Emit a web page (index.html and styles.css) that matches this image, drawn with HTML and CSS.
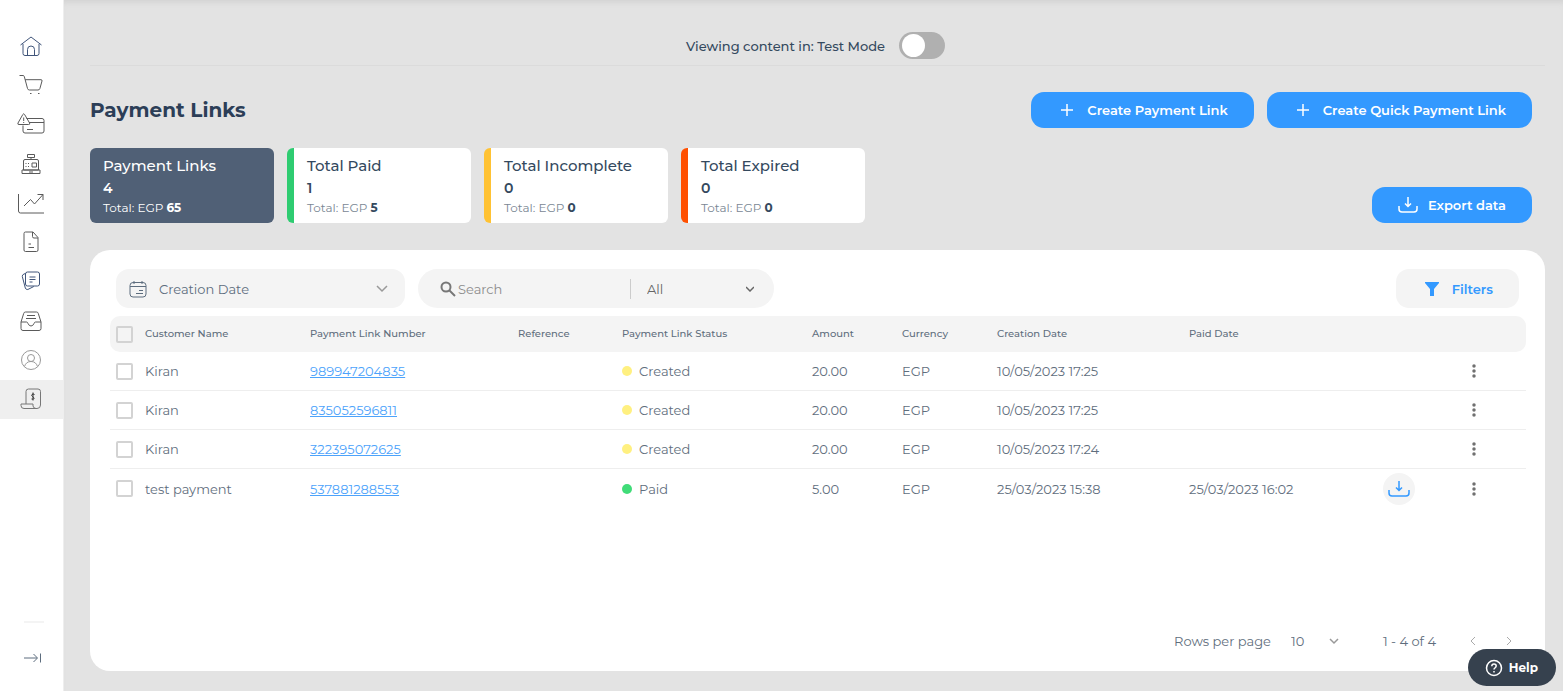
FILE: index.html
```html
<!doctype html>
<html lang="en">

<head>
  <meta charset="UTF-8" />
  <meta name="viewport" content="width=device-width, initial-scale=1" />
  <title>Payment Links</title>
  <link rel="stylesheet" href="styles.css">
</head>

<body>
  <aside class="sidebar">
    <nav class="side-nav" aria-label="Main">
      <a href="#" class="side-link navy" aria-label="Home">
        <svg width="24" height="24" viewBox="0 0 24 24"><path d="M1.500 11 12 3l10.500 8M4 10v9.500q0 2 2 2h12q2 0 2-2V10M8.500 21v-5.500a3.500 3.500 0 0 1 7 0V21" /></svg>
      </a>
      <a href="#" class="side-link" aria-label="Orders">
        <svg width="24" height="24" viewBox="0 0 24 24"><path d="M.5 2.500h3.500q1 0 1.300 1l3.200 12q.4 1.500 2 1.500h8.500q1.500 0 1.900-1.500L23 8q.3-1.300-1-1.300H6.200" /><path d="M11 20.500h1.500M19 20.500h1.500" /></svg>
      </a>
      <a href="#" class="side-link" aria-label="Risk">
        <svg width="28" height="24" viewBox="0 0 28 24"><path d="M9.500 6.500H25q2 0 2 2V19q0 2-2 2H8q-2 0-2-2v-5.500M12 10.500h15M10 17.500h6" /><path d="M5.800 2.500q.9-1.500 1.800 0l5 8.500q.7 1.500-1 1.500H2q-1.700 0-1-1.500zM6.700 5.500v3.500M6.700 10v1" /></svg>
      </a>
      <a href="#" class="side-link" aria-label="Point of sale">
        <svg width="22" height="24" viewBox="0 0 22 24"><path d="M7.500 2.500h7v3h-7zM11 5.500v2M5 7.500h12q1.500 0 1.500 1.500v9h-15V9q0-1.500 1.500-1.500zM2 18h18v3.500H2zM12 11h4.500v4H12zM6 11v1M6 14v1M8.500 11v1M8.500 14v1M9 20h4" /></svg>
      </a>
      <a href="#" class="side-link" aria-label="Analytics">
        <svg width="28" height="24" viewBox="0 0 28 24"><path d="M1.500 3v17q0 2 2 2H27M7 15l6.500-6.500 4 4.500L26 3.500M20.500 3.500H26V9" /></svg>
      </a>
      <a href="#" class="side-link" aria-label="Invoices">
        <svg width="22" height="24" viewBox="0 0 22 24"><path d="M5.500 2H13l5 5.500V20q0 1.500-1.500 1.500h-11Q4 21.500 4 20V3.500Q4 2 5.500 2zM12.500 2v4.500q0 1.500 1.500 1.500h4" /><path d="M8.500 14h2.500M8.500 17.500h5.500" /></svg>
      </a>
      <a href="#" class="side-link navy" aria-label="Catalog">
        <svg width="24" height="24" viewBox="0 0 24 24"><path d="M8.500 3h10Q20.500 3 20.500 5v10q0 2-2 2h-10q-2 0-2-2V5q0-2 2-2z" /><path d="M6.500 4.500 5 5Q3 5.800 3.300 7.500l3 11.500q.6 1.800 2.500 1.500l6-3M10.500 8h6M10.500 10.500h6M10.500 13h3" /></svg>
      </a>
      <a href="#" class="side-link" aria-label="Inbox">
        <svg width="24" height="24" viewBox="0 0 24 24"><path d="M6.500 3h11q1.500 0 1.800 1.500L22 13v6.500q0 2-2 2H4q-2 0-2-2V13l2.700-8.500Q5 3 6.500 3zM2 13h5.500q1 0 1.500 1.500Q10 17 12 17t3-2.500q.5-1.500 1.500-1.500H22M8 6.500h8M7 9.500h10" /></svg>
      </a>
      <a href="#" class="side-link light" aria-label="Customers">
        <svg width="22" height="24" viewBox="0 0 22 24"><circle cx="11" cy="12" r="9.500" /><circle cx="11" cy="10" r="3.500" /><path d="M4.500 18.500q1.500-5 6.500-5t6.500 5" /></svg>
      </a>
      <a href="#" class="side-link active" aria-label="Payment Links">
        <svg width="24" height="24" viewBox="0 0 24 24"><path d="M7 17V4.500Q7 2 9.500 2H19q2.500 0 2.500 2.500V18q0 3.500-3.500 3.500H5q-3 0-3-3V17h12v2q.5 2.500 3 2.500" /><path class="bold" d="M15.500 7.500q-1.500-1-2.500 0t.5 2 1.500 2-2.500.5M14 5.500v8" /></svg>
      </a>
    </nav>
    <div class="side-bottom">
      <button type="button" class="expand-button" aria-label="Expand menu">
        <svg width="18" height="12" viewBox="0 0 18 12"><path d="M0 6h13M9.500 2l4 4-4 4M16.500 1.500v9" /></svg>
      </button>
    </div>
  </aside>

  <main class="main">
    <div class="mode-bar">
      <label for="testMode">Viewing content in: Test Mode</label>
      <input type="checkbox" id="testMode" class="switch" role="switch" />
    </div>

    <div class="row">
      <h1>Payment Links</h1>
      <div class="actions">
        <button type="button" class="primary-button">
          <svg width="12" height="12" viewBox="0 0 12 12"><path d="M6 0v12M0 6h12" /></svg>
          Create Payment Link
        </button>
        <button type="button" class="primary-button">
          <svg width="12" height="12" viewBox="0 0 12 12"><path d="M6 0v12M0 6h12" /></svg>
          Create Quick Payment Link
        </button>
      </div>
    </div>

    <div class="row summary">
      <div class="cards">
        <div class="card selected">
          <div class="card-title">Payment Links</div>
          <div class="card-count">4</div>
          <div class="card-total">Total: EGP <b>65</b></div>
        </div>
        <div class="card paid">
          <div class="card-title">Total Paid</div>
          <div class="card-count">1</div>
          <div class="card-total">Total: EGP <b>5</b></div>
        </div>
        <div class="card incomplete">
          <div class="card-title">Total Incomplete</div>
          <div class="card-count">0</div>
          <div class="card-total">Total: EGP <b>0</b></div>
        </div>
        <div class="card expired">
          <div class="card-title">Total Expired</div>
          <div class="card-count">0</div>
          <div class="card-total">Total: EGP <b>0</b></div>
        </div>
      </div>
      <button type="button" class="primary-button export">
        <svg width="20" height="16" viewBox="0 0 20 16"><path d="M1 9v3q0 3 3 3h12q3 0 3-3V9M10 0v9M7 6.500l3 3 3-3" /></svg>
        Export data
      </button>
    </div>

    <section class="panel">
      <div class="toolbar">
        <div class="date-box">
          <svg width="18" height="18" viewBox="0 0 18 18"><path d="M4 2.500h10q3 0 3 3V14q0 3-3 3H4q-3 0-3-3V5.500q0-3 3-3zM1 6.500h16M5 1v3M13 1v3M10 10.500h4M7 13.500h7" /></svg>
          <select class="date-select" aria-label="Date type">
            <option>Creation Date</option>
          </select>
          <svg class="chevron" width="12" height="8" viewBox="0 0 12 8"><path d="M1 1l5 5 5-5" /></svg>
        </div>
        <div class="search-box">
          <svg class="search-icon" width="16" height="16" viewBox="0 0 16 16"><circle cx="6" cy="6" r="4.500" /><path d="M9.500 9.500 15 15" /></svg>
          <input type="search" class="search-input" placeholder="Search" aria-label="Search" />
          <select class="search-select" aria-label="Search in">
            <option>All</option>
          </select>
          <svg class="chevron dark" width="8" height="6" viewBox="0 0 8 6"><path d="M0 1l4 4 4-4" /></svg>
        </div>
        <button type="button" class="filter-button">
          <svg width="14" height="14" viewBox="0 0 14 14"><path d="M0 0h14v1L9 7v7H5V7L0 1z" /></svg>
          Filters
        </button>
      </div>

      <table class="links-table">
        <colgroup>
          <col class="col-check"><col class="col-name"><col class="col-number"><col class="col-ref"><col class="col-status">
          <col class="col-amount"><col class="col-currency"><col class="col-created"><col class="col-paid"><col class="col-download"><col class="col-menu">
        </colgroup>
        <thead>
          <tr>
            <th><input type="checkbox" class="check" aria-label="Select all" /></th>
            <th>Customer Name</th>
            <th>Payment Link Number</th>
            <th>Reference</th>
            <th>Payment Link Status</th>
            <th>Amount</th>
            <th>Currency</th>
            <th>Creation Date</th>
            <th>Paid Date</th>
            <th></th>
            <th></th>
          </tr>
        </thead>
        <tbody id="linkRows"></tbody>
      </table>

      <div class="pagination">
        <label for="pageSize">Rows per page</label>
        <select id="pageSize" class="page-size">
          <option>10</option>
        </select>
        <svg class="chevron" width="10" height="7" viewBox="0 0 10 7"><path d="M1 1l4 4 4-4" /></svg>
        <span class="page-range">1 - 4 of 4</span>
        <button type="button" class="page-button" aria-label="Previous page">
          <svg width="7" height="10" viewBox="0 0 7 10"><path d="M6 1L2 5l4 4" /></svg>
        </button>
        <button type="button" class="page-button" aria-label="Next page">
          <svg width="7" height="10" viewBox="0 0 7 10"><path d="M1 1l4 4-4 4" /></svg>
        </button>
      </div>
    </section>
  </main>

  <button type="button" class="help-button">
    <svg width="18" height="18" viewBox="0 0 18 18"><circle cx="9" cy="9" r="7.500" /><path d="M6.800 7.300q0-2.200 2.200-2.200t2.200 2q0 1-1.200 1.700Q9 9.300 9 10.500M9 12v1.500" /></svg>
    Help
  </button>

  <script src="script.js"></script>
</body>

</html>
```
FILE: styles.css
```css
* {
  box-sizing: border-box;
}

body {
  display: flex;
  min-height: 100vh;
  margin: 0;
  font-family: Montserrat, Inter, "Open Sans", sans-serif;
  font-size: 13px;
  line-height: 20px;
  background-color: #e3e3e3;
  color: #34495e;
}

button,
input,
select {
  font: inherit;
  color: inherit;
  margin: 0;
}

button {
  cursor: pointer;
  border: none;
  padding: 0;
  background: none;
}

select {
  appearance: none;
  border: none;
  padding: 0;
  background: none;
}

svg {
  display: block;
  flex: none;
  fill: none;
  stroke: currentColor;
}

/* Sidebar */
.sidebar {
  display: flex;
  flex-direction: column;
  justify-content: space-between;
  flex: none;
  width: 64px;
  padding: 26px 0 22px;
  background-color: white;
  border-right: 1px solid #eee;
}

.side-nav {
  display: flex;
  flex-direction: column;
  height: 393px;
}

.side-link {
  display: flex;
  flex: 1;
  align-items: center;
  justify-content: center;
  padding-right: 2px;
  color: #5a5a5a;
}

.side-link.navy {
  color: #40557a;
}

.side-link.light {
  color: #999;
}

.side-link.active {
  background-color: #efefef;
  color: #777;
}

.bold {
  stroke: #333;
}

.side-bottom {
  width: 20px;
  margin-left: 24px;
  padding-top: 26px;
  border-top: 2px solid #f4f4f4;
}

.expand-button {
  color: #5d6d7e;
}

/* Page */
.main {
  display: flex;
  flex: 1;
  flex-direction: column;
  min-width: 0;
  padding: 0 18px 20px 26px;
  box-shadow: inset 0 6px 6px -4px #d0d0d0;
}

.mode-bar {
  display: flex;
  align-items: center;
  justify-content: center;
  gap: 14px;
  padding: 32px 4px 6px 0;
  border-bottom: 1px solid #dbdbdb;
}

.switch {
  appearance: none;
  width: 46px;
  height: 27px;
  padding: 2px 3px;
  border-radius: 14px;
  background-color: #b0b0b0;
  cursor: pointer;
}

.switch::before {
  content: "";
  display: block;
  width: 23px;
  height: 23px;
  border-radius: 50%;
  background-color: white;
}

.switch:checked {
  background-color: #3399ff;
}

.switch:checked::before {
  margin-left: auto;
}

label {
  font-weight: 500;
}

.row {
  display: flex;
  align-items: center;
  justify-content: space-between;
  padding: 26px 13px 0 0;
}

.row.summary {
  align-items: flex-end;
  padding-top: 20px;
}

h1 {
  margin: 0;
  font-size: 20px;
  line-height: 28px;
  font-weight: 700;
  color: #2c3e57;
}

.actions,
.cards {
  display: flex;
  gap: 13px;
}

.primary-button {
  display: flex;
  align-items: center;
  gap: 14px;
  height: 36px;
  padding: 0 26px 0 30px;
  border-radius: 13px;
  background-color: #3399ff;
  color: white;
  font-weight: 600;
}

.primary-button.export {
  gap: 10px;
  padding-left: 26px;
}

.primary-button svg {
  stroke-width: 1.5;
}

.card {
  width: 184px;
  height: 75px;
  padding: 8px 13px;
  border-radius: 6px;
  background-color: white;
}

.card.selected {
  background-color: #506076;
  color: white;
}

.card.paid {
  border-left: 7px solid #2ecc71;
}

.card.incomplete {
  border-left: 7px solid #ffc233;
}

.card.expired {
  border-left: 7px solid #ff5000;
}

.card-title {
  font-size: 15px;
  font-weight: 500;
}

.card-count {
  font-size: 14px;
  line-height: 24px;
  font-weight: 600;
}

.card-total {
  font-size: 12px;
  line-height: 16px;
  color: #7b8794;
}

.card-total b {
  color: #34495e;
}

.selected .card-total,
.selected b {
  color: white;
}

/* Links panel */
.panel {
  display: flex;
  flex: 1;
  flex-direction: column;
  margin-top: 27px;
  padding: 19px 20px 20px;
  border-radius: 20px;
  background-color: white;
}

.toolbar {
  display: flex;
  gap: 13px;
  padding: 0 6px 8px;
}

.date-box,
.search-box,
.filter-button {
  display: flex;
  align-items: center;
  height: 39px;
  border-radius: 13px;
  background-color: #f4f4f4;
}

.date-box {
  gap: 12px;
  width: 289px;
  padding: 0 17px 0 13px;
  color: #5d6d7e;
}

.date-select {
  flex: 1;
}

.chevron {
  stroke: #999;
  stroke-width: 1.5;
}

.chevron.dark {
  stroke: #666;
}

.search-box {
  width: 356px;
  padding: 0 20px 0 22px;
  border-radius: 20px;
  color: #666;
}

.search-icon {
  stroke: #777;
  stroke-width: 2;
}

.search-input {
  flex: 1;
  min-width: 0;
  padding: 0 0 0 2px;
  border: none;
  outline: none;
  background: none;
}

.search-input::placeholder {
  color: #8c8c8c;
}

.search-select {
  width: 116px;
  padding-left: 16px;
  border-left: 1px solid #ccc;
}

.filter-button {
  gap: 13px;
  margin-left: auto;
  padding: 0 26px 0 29px;
  color: #3399ff;
  font-weight: 600;
}

.filter-button svg {
  fill: currentColor;
  stroke: none;
}

.links-table {
  width: 100%;
  table-layout: fixed;
  border-collapse: separate;
  border-spacing: 0;
  color: #5f6e7d;
}

.col-check { width: 35px; }
.col-name { width: 165px; }
.col-number { width: 208px; }
.col-ref { width: 104px; }
.col-status { width: 190px; }
.col-amount { width: 90px; }
.col-currency { width: 95px; }
.col-created { width: 192px; }
.col-paid { width: 194px; }
.col-download { width: 75px; }
.col-menu { width: 68px; }

th,
td {
  padding: 0;
  text-align: left;
  white-space: nowrap;
}

th {
  height: 36px;
  background-color: #f4f4f4;
  font-size: 10px;
  font-weight: 500;
}

th:first-child {
  border-radius: 10px 0 0 10px;
}

th:last-child {
  border-radius: 0 10px 10px 0;
}

td {
  height: 39px;
  border-bottom: 1px solid #eee;
}

tr:last-child td {
  border-bottom: none;
}

td a {
  color: #4da3fb;
}

.check {
  display: block;
  appearance: none;
  width: 17px;
  height: 17px;
  margin-left: 6px;
  border: 2px solid #d3d3d3;
  border-radius: 2px;
}

.check:checked {
  background-color: #3399ff;
}

.status {
  display: flex;
  align-items: center;
  gap: 7px;
}

.dot {
  width: 10px;
  height: 10px;
  border-radius: 50%;
  background-color: #fff080;
}

.dot.paid {
  background-color: #40dc78;
}

.download-button {
  display: grid;
  place-items: center;
  width: 32px;
  height: 32px;
  border-radius: 50%;
  background-color: #f4f4f4;
  color: #3399ff;
}

.download-button svg {
  stroke-width: 1.5;
}

.menu-button {
  display: block;
  width: 32px;
  height: 24px;
  color: #707070;
}

.menu-button svg {
  margin: 0 auto;
  fill: currentColor;
  stroke: none;
}

.pagination {
  display: flex;
  align-items: center;
  justify-content: flex-end;
  margin-top: auto;
  padding-right: 4px;
  color: #5f6e7d;
}

.pagination label {
  font-weight: 400;
}

.page-size {
  width: 38px;
  margin-left: 20px;
}

.page-range {
  margin: 0 24px 0 44px;
}

.page-button {
  display: grid;
  place-items: center;
  width: 24px;
  height: 20px;
  color: #aaa;
}

.page-button + .page-button {
  margin-left: 13px;
}

/* Floating help */
.help-button {
  position: fixed;
  right: 7px;
  bottom: 5px;
  display: flex;
  align-items: center;
  gap: 6px;
  height: 37px;
  padding: 0 18px 0 17px;
  border-radius: 19px;
  background-color: #36414e;
  color: white;
  font-size: 12px;
  font-weight: 700;
}

.help-button svg {
  stroke-width: 1.5;
}
```
FILE: script.js
```js
const links = [
  { name: "Kiran", number: "989947204835", status: "Created", amount: "20.00", created: "10/05/2023 17:25", paid: "" },
  { name: "Kiran", number: "835052596811", status: "Created", amount: "20.00", created: "10/05/2023 17:25", paid: "" },
  { name: "Kiran", number: "322395072625", status: "Created", amount: "20.00", created: "10/05/2023 17:24", paid: "" },
  { name: "test payment", number: "537881288553", status: "Paid", amount: "5.00", created: "25/03/2023 15:38", paid: "25/03/2023 16:02" },
];

const downloadButton = `
  <button type="button" class="download-button" aria-label="Download receipt">
    <svg width="22" height="16" viewBox="0 0 22 16"><path d="M1 9v3q0 3 3 3h14q3 0 3-3V9M11 0v9M8 6.500l3 3 3-3" /></svg>
  </button>`;

// Fill the table
document.getElementById("linkRows").innerHTML = links
  .map((link) => `
    <tr>
      <td><input type="checkbox" class="check" aria-label="Select ${link.number}" /></td>
      <td>${link.name}</td>
      <td><a href="#">${link.number}</a></td>
      <td></td>
      <td><div class="status"><span class="dot ${link.status.toLowerCase()}"></span>${link.status}</div></td>
      <td>${link.amount}</td>
      <td>EGP</td>
      <td>${link.created}</td>
      <td>${link.paid}</td>
      <td>${link.paid ? downloadButton : ""}</td>
      <td>
        <button type="button" class="menu-button" aria-label="More actions">
          <svg width="4" height="14" viewBox="0 0 4 14"><circle cx="2" cy="2" r="1.750" /><circle cx="2" cy="7" r="1.750" /><circle cx="2" cy="12" r="1.750" /></svg>
        </button>
      </td>
    </tr>`)
  .join("");
```
